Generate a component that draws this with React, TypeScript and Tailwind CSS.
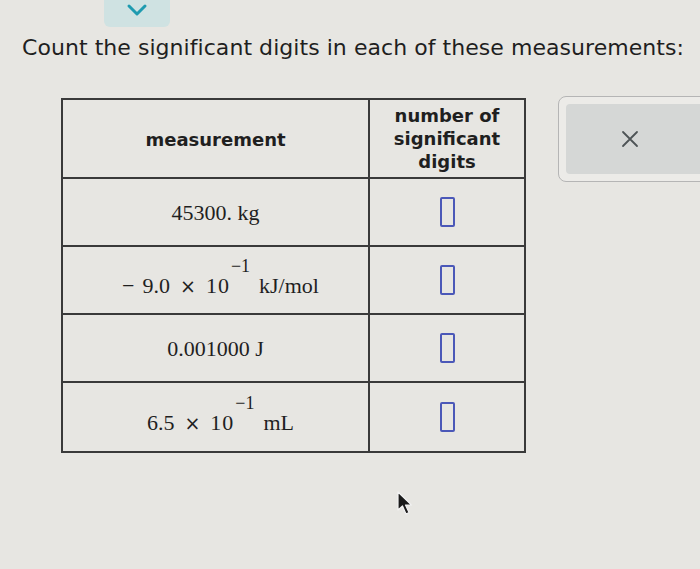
import React from 'react';

const Box = () => (
  <div className="w-[15px] h-[30px] border-2 border-[#4b58b8] rounded-[2px] bg-transparent" />
);

const Sci = ({ sign, mant, exp, unit }: { sign?: boolean; mant: string; exp: string; unit: string }) => (
  <span className="inline-flex items-baseline whitespace-nowrap pt-[10px] pl-[10px]">
    {sign && <span className="mr-[8px]">−</span>}
    <span>{mant}</span>
    <span className="mx-[10px] font-['DejaVu_Sans',sans-serif] text-[19px]">×</span>
    <span className="tracking-[1px]">10</span>
    <span className="relative -top-[21px] text-[18px] ml-[1px] mr-[9px]">{exp}</span>
    <span>{unit}</span>
  </span>
);

const rows: React.ReactNode[] = [
  <span>45300. kg</span>,
  <Sci sign mant="9.0" exp="−1" unit="kJ/mol" />,
  <span>0.001000 J</span>,
  <Sci mant="6.5" exp="−1" unit="mL" />,
];

export default function App() {
  return (
    <div className="relative w-[700px] h-[569px] overflow-hidden bg-[#e7e6e2] font-['DejaVu_Sans',sans-serif] text-[#1f1f1f]">
      <div className="ml-[104px] w-[66px] h-[27px] rounded-b-[6px] bg-[#cfe2e2] flex items-start justify-center pt-[3px]">
        <svg width="22" height="14" viewBox="0 0 22 14">
          <path d="M3 3 L11 11 L19 3" fill="none" stroke="#1e9bb0" strokeWidth="3" strokeLinecap="round" strokeLinejoin="round" />
        </svg>
      </div>
      <h1 className="ml-[22px] mt-[8px] text-[22px] leading-[26px] tracking-[0.05px] whitespace-nowrap">
        Count the significant digits in each of these measurements:
      </h1>
      <div className="flex items-start mt-[37px] ml-[61px]">
        <div className="shrink-0 border-2 border-[#3a3a3a] w-[465px]">
          <div className="flex h-[79px] border-b-2 border-[#3a3a3a]">
            <div className="w-[307px] border-r-2 border-[#3a3a3a] flex items-center justify-center font-bold text-[18px] pt-[2px]">
              measurement
            </div>
            <div className="flex-1 flex items-center justify-center text-center font-bold text-[18px] leading-[23px]">
              number of<br />significant<br />digits
            </div>
          </div>
          {rows.map((r, i) => (
            <div key={i} className={`flex h-[68px] ${i < 3 ? 'border-b-2 border-[#3a3a3a]' : ''}`}>
              <div className="w-[307px] border-r-2 border-[#3a3a3a] flex items-center justify-center font-['Liberation_Serif',serif] text-[22px]">
                {r}
              </div>
              <div className="flex-1 flex items-center justify-center">
                <Box />
              </div>
            </div>
          ))}
        </div>
        <div className="shrink-0 ml-[32px] -mt-[2px] w-[160px] h-[86px] rounded-[8px] border-[1.5px] border-[#b5b5b5] bg-[#ecebe8] p-[7px] pr-0">
          <div className="h-full rounded-l-[4px] bg-[#d5d7d6] flex items-center pl-[54px]">
            <svg width="20" height="20" viewBox="0 0 20 20">
              <path d="M3 3 L17 17 M17 3 L3 17" stroke="#4e5456" strokeWidth="1.8" strokeLinecap="round" />
            </svg>
          </div>
        </div>
      </div>
      <svg className="absolute left-[396px] top-[490px]" width="18" height="26" viewBox="0 0 18 26">
        <path d="M2 2 L2 20 L6.5 16 L10 24 L13 22.5 L9.5 15 L15.5 15 Z" fill="#1a1a1a" stroke="#f2f2f2" strokeWidth="1.2" strokeLinejoin="round" />
      </svg>
    </div>
  );
}
